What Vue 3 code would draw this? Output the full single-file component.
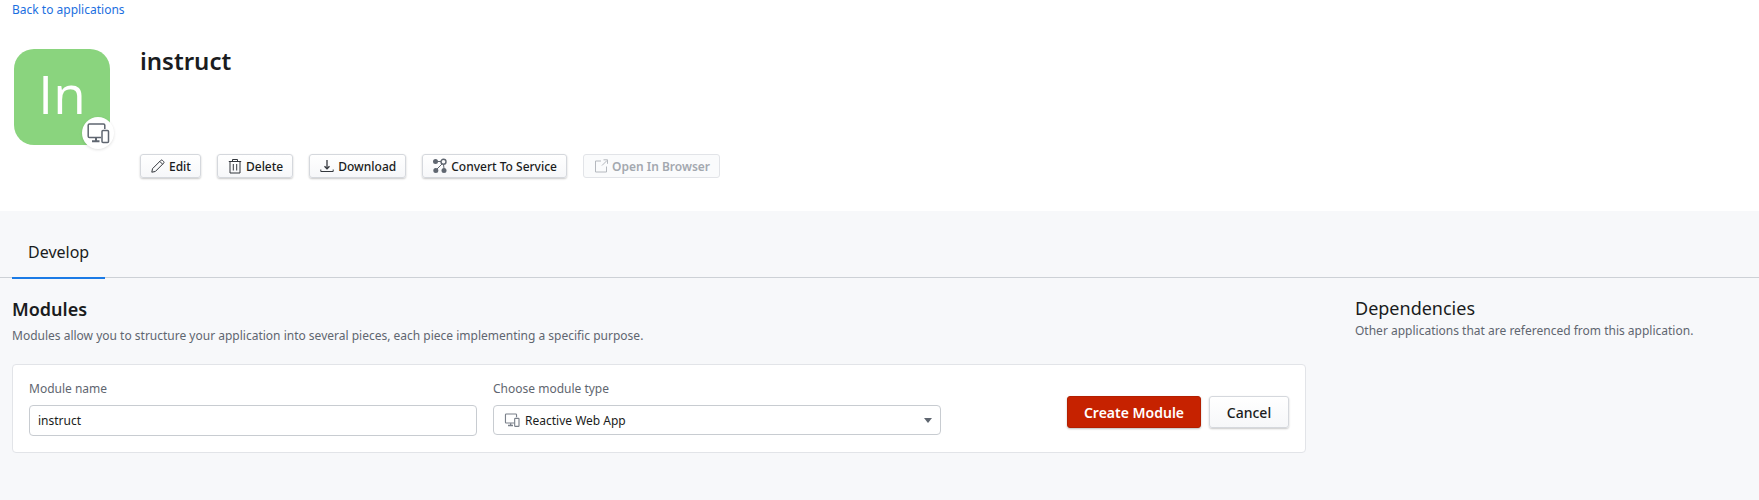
<script setup>
const actions = [
  { label: 'Edit', icon: 'edit' },
  { label: 'Delete', icon: 'delete' },
  { label: 'Download', icon: 'download' },
  { label: 'Convert To Service', icon: 'convert' },
  { label: 'Open In Browser', icon: 'open', disabled: true },
]
</script>

<template>
  <div class="page">
    <header class="top">
      <a class="back" href="#">Back to applications</a>
      <div class="app">
        <div class="tile">
          <span class="initials">In</span>
          <span class="badge">
            <svg width="24" height="24" viewBox="0 0 24 24" fill="none" stroke="#5f6670" stroke-width="1.5">
              <path d="M15 16.500H3.500a1.300 1.300 0 0 1-1.300-1.300V4.300A1.300 1.300 0 0 1 3.500 3h14a1.300 1.300 0 0 1 1.300 1.300V8" />
              <path d="M10 17v2.500M6 20.200h7.500" stroke-width="2" />
              <rect x="16" y="9.500" width="6.500" height="12" rx="1" />
            </svg>
          </span>
        </div>
        <div class="info">
          <h1>instruct</h1>
          <div class="actions">
            <button v-for="a in actions" :key="a.label" class="btn" :disabled="a.disabled">
              <svg width="16" height="16" viewBox="0 0 16 16" fill="none" stroke="currentColor" stroke-width="1" class="ic">
                <template v-if="a.icon === 'edit'">
                  <path d="M1.800 14.200l.7-3.500 8.300-8.300a1.200 1.200 0 0 1 1.700 0l1.100 1.100a1.200 1.200 0 0 1 0 1.700l-8.300 8.300z" />
                  <path d="M9.800 3.400l2.800 2.800" />
                </template>
                <template v-else-if="a.icon === 'delete'">
                  <path d="M1.800 3.500h12.400M5.500 3.500V1.500h5v2M3 3.500v11.500h10V3.500M6.300 6v6.500M9.700 6v6.500" />
                </template>
                <template v-else-if="a.icon === 'download'">
                  <path d="M8 2v8.500" stroke-width="1.300" />
                  <path d="M5.500 8.200L8 10.800l2.500-2.600" stroke-width="1.300" />
                  <path d="M1.800 11.500v2h12.400v-2" />
                </template>
                <template v-else-if="a.icon === 'convert'">
                  <circle cx="3.500" cy="3.500" r="2.500" fill="#5f6670" stroke="none" />
                  <circle cx="11.500" cy="3.700" r="2.500" stroke="#5f6670" stroke-width="1.400" />
                  <circle cx="3.800" cy="12.500" r="2.500" fill="#5f6670" stroke="none" />
                  <circle cx="12" cy="12.500" r="2.500" fill="#5f6670" stroke="none" />
                  <path d="M5.500 3.500h3.500M10 6l-5 5M11.500 6.500l.5 4" stroke="#5f6670" />
                </template>
                <template v-else>
                  <path d="M8 3H2.500v11h11V8.500M9 7.500L14 2.500M10.500 1.800h4v4" />
                </template>
              </svg>
              {{ a.label }}
            </button>
          </div>
        </div>
      </div>
    </header>

    <main class="body">
      <nav class="tabs">
        <span class="tab">Develop</span>
      </nav>
      <div class="cols">
        <section class="modules">
          <h2>Modules</h2>
          <p class="desc">Modules allow you to structure your application into several pieces, each piece implementing a specific purpose.</p>
          <div class="card">
            <div class="field">
              <label>Module name</label>
              <div class="input">instruct</div>
            </div>
            <div class="field">
              <label>Choose module type</label>
              <div class="select">
                <svg width="16" height="16" viewBox="0 0 24 24" fill="none" stroke="#7a808a" stroke-width="1.700">
                  <path d="M15 16.500H3.500a1.300 1.300 0 0 1-1.300-1.300V4.300A1.300 1.300 0 0 1 3.500 3h14a1.300 1.300 0 0 1 1.300 1.300V8" />
                  <path d="M10 17v2.500M6 20.200h7.500" stroke-width="2" />
                  <rect x="16" y="9.500" width="6.500" height="12" rx="1" />
                </svg>
                <span>Reactive Web App</span>
                <i class="caret"></i>
              </div>
            </div>
            <div class="form-btns">
              <button class="primary">Create Module</button>
              <button class="cancel">Cancel</button>
            </div>
          </div>
        </section>
        <aside class="deps">
          <h3>Dependencies</h3>
          <p class="desc">Other applications that are referenced from this application.</p>
        </aside>
      </div>
    </main>
  </div>
</template>

<style>
html, body { margin: 0; background: #f7f8fa; }
</style>

<style scoped>
.page {
  font-family: "Noto Sans", "Open Sans", sans-serif;
  color: #1a1c20;
  height: 500px;
  overflow: hidden;
  background: #f7f8fa;
}
.top {
  background: #fff;
  height: 211px;
  box-sizing: border-box;
  padding-left: 12px;
}
.back {
  display: block;
  font-size: 12px;
  line-height: 19px;
  color: #1b6fe0;
  text-decoration: none;
}
.app {
  display: flex;
  margin-top: 30px;
  padding-left: 2px;
}
.tile {
  position: relative;
  width: 96px;
  height: 96px;
  border-radius: 20px;
  background: #8ad47e;
  display: flex;
  align-items: center;
  justify-content: center;
  flex: none;
}
.initials {
  color: #fff;
  font-family: "Open Sans", sans-serif;
  font-weight: 400;
  font-size: 53px;
  line-height: 1;
  position: relative;
  top: -4px;
}
.badge {
  position: absolute;
  left: 68px;
  top: 68px;
  width: 32px;
  height: 32px;
  border-radius: 50%;
  background: #fff;
  box-shadow: 0 1px 3px rgba(0, 0, 0, 0.12);
  display: flex;
  align-items: center;
  justify-content: center;
}
.info { margin-left: 30px; }
h1 {
  margin: 0;
  font-size: 24px;
  line-height: 24px;
  font-weight: 600;
  height: 105px;
}
.actions {
  display: flex;
  gap: 16px;
}
.btn {
  display: flex;
  align-items: center;
  gap: 3px;
  height: 24px;
  padding: 0 9px 0 9px;
  box-sizing: border-box;
  border: 1px solid #d5d8dd;
  border-radius: 3px;
  background: linear-gradient(#fff, #f6f7f9);
  box-shadow: 0 1px 2px rgba(0, 0, 0, 0.22);
  font-family: inherit;
  font-size: 12px;
  font-weight: 500;
  color: #1a1c20;
}
.btn .ic { color: #33373d; flex: none; }
.btn:disabled {
  color: #a3a8af;
  box-shadow: none;
  background: #fafbfc;
  border-color: #e2e4e8;
  font-weight: 600;
}
.btn:disabled .ic { color: #b4b8be; }
.body { padding-top: 21px; }
.tabs {
  height: 45px;
  border-bottom: 1px solid #cdd1d6;
}
.tab {
  display: block;
  height: 45px;
  margin-left: 12px;
  padding-left: 16px;
  box-sizing: content-box;
  width: 77px;
  border-bottom: 2px solid #1b7be6;
  font-size: 16px;
  line-height: 40px;
  color: #1a1c20;
}
.cols {
  display: flex;
  padding-left: 12px;
  padding-top: 18px;
}
.modules { width: 1294px; flex: none; padding-top: 1px; }
h2 {
  margin: 0;
  font-size: 18px;
  line-height: 24px;
  font-weight: 600;
}
.desc {
  margin: 0;
  font-size: 12px;
  line-height: 18px;
  color: #5f6670;
}
.modules .desc { margin-top: 6px; }
.card {
  margin-top: 19px;
  height: 89px;
  box-sizing: border-box;
  background: #fff;
  border: 1px solid #e2e4e8;
  border-radius: 4px;
  display: flex;
  padding: 0 16px;
  gap: 16px;
}
.field { width: 448px; flex: none; padding-top: 15px; }
.field label {
  display: block;
  font-size: 12px;
  line-height: 18px;
  color: #5f6670;
  margin-bottom: 7px;
}
.input, .select {
  box-sizing: border-box;
  border: 1px solid #c8ccd1;
  border-radius: 4px;
  background: #fff;
  font-size: 12px;
  display: flex;
  align-items: center;
}
.input { height: 31px; padding-left: 8px; }
.select {
  height: 30px;
  padding: 0 8px 0 10px;
  gap: 5px;
}
.select span { flex: 1; }
.caret {
  width: 0;
  height: 0;
  border-left: 4px solid transparent;
  border-right: 4px solid transparent;
  border-top: 5px solid #5f6670;
}
.form-btns {
  display: flex;
  gap: 8px;
  margin-left: 110px;
  padding-top: 31px;
  align-items: flex-start;
}
.form-btns button {
  height: 32px;
  box-sizing: border-box;
  border-radius: 3px;
  font-family: inherit;
  font-size: 14px;
  padding: 0;
}
.primary {
  width: 134px;
  background: #c62200;
  border: 1px solid #b31f00;
  color: #fff;
  font-weight: 600;
  box-shadow: 0 1px 2px rgba(0, 0, 0, 0.25);
}
.cancel {
  width: 80px;
  background: linear-gradient(#fff, #f6f7f9);
  border: 1px solid #d5d8dd;
  color: #1a1c20;
  font-weight: 500;
  box-shadow: 0 1px 2px rgba(0, 0, 0, 0.22);
}
.deps { margin-left: 49px; }
h3 {
  margin: 0;
  font-size: 18px;
  line-height: 24px;
  font-weight: 400;
  color: #1a1c20;
}
.deps .desc { margin-top: 2px; }
</style>
